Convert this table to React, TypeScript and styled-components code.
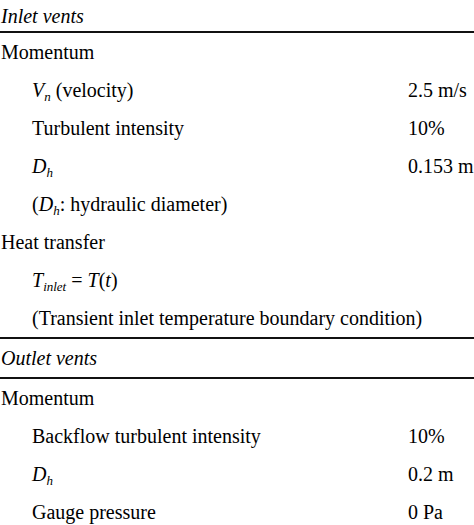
import React from 'react';
import styled, { createGlobalStyle } from 'styled-components';

const GlobalStyle = createGlobalStyle`
  html, body {
    margin: 0;
    padding: 0;
    background: #ffffff;
  }
  body {
    font-family: 'Liberation Serif', 'Times New Roman', serif;
    color: #000000;
  }
`;

type RowData = {
  label: React.ReactNode;
  value?: string;
  indent?: boolean;
};

type Section = {
  title: string;
  rows: RowData[];
};

const Table = styled.div`
  width: 474px;
  overflow: hidden;
  display: flex;
  flex-direction: column;
`;

const Title = styled.div<{ $height: number }>`
  height: ${p => p.$height}px;
  display: flex;
  align-items: center;
  padding-left: 1px;
  font-style: italic;
  font-size: 20px;
  line-height: 1;
`;

const Rule = styled.div`
  height: 2px;
  background: #111111;
`;

const Row = styled.div`
  height: 38px;
  display: grid;
  grid-template-columns: 408px auto;
  align-items: center;
  font-size: 20px;
  line-height: 1;
  white-space: nowrap;
`;

const Label = styled.div<{ $indent?: boolean }>`
  padding-left: ${p => (p.$indent ? 32 : 1)}px;
`;

const Value = styled.div`
  white-space: nowrap;
`;

const I = styled.i`
  font-style: italic;
`;

const Sub = styled.sub`
  font-size: 13px;
  font-style: italic;
  vertical-align: -4px;
  line-height: 0;
`;

const Dh = () => (
  <>
    <I>D</I>
    <Sub>h</Sub>
  </>
);

const sections: Section[] = [
  {
    title: 'Inlet vents',
    rows: [
      { label: 'Momentum' },
      {
        label: (
          <>
            <I>V</I>
            <Sub>n</Sub> (velocity)
          </>
        ),
        value: '2.5 m/s',
        indent: true,
      },
      { label: 'Turbulent intensity', value: '10%', indent: true },
      { label: <Dh />, value: '0.153 m', indent: true },
      {
        label: (
          <>
            (<Dh />: hydraulic diameter)
          </>
        ),
        indent: true,
      },
      { label: 'Heat transfer' },
      {
        label: (
          <>
            <I>T</I>
            <Sub>inlet</Sub> = <I>T</I>(<I>t</I>)
          </>
        ),
        indent: true,
      },
      { label: '(Transient inlet temperature boundary condition)', indent: true },
    ],
  },
  {
    title: 'Outlet vents',
    rows: [
      { label: 'Momentum' },
      { label: 'Backflow turbulent intensity', value: '10%', indent: true },
      { label: <Dh />, value: '0.2 m', indent: true },
      { label: 'Gauge pressure', value: '0 Pa', indent: true },
    ],
  },
];

const App = () => {
  return (
    <>
      <GlobalStyle />
      <Table>
        {sections.map((section, si) => (
          <React.Fragment key={section.title}>
            {si > 0 && <Rule />}
            <Title $height={si === 0 ? 31 : 38}>{section.title}</Title>
            <Rule />
            {section.rows.map((row, ri) => (
              <Row key={ri}>
                <Label $indent={row.indent}>{row.label}</Label>
                <Value>{row.value}</Value>
              </Row>
            ))}
          </React.Fragment>
        ))}
      </Table>
    </>
  );
};

export default App;
